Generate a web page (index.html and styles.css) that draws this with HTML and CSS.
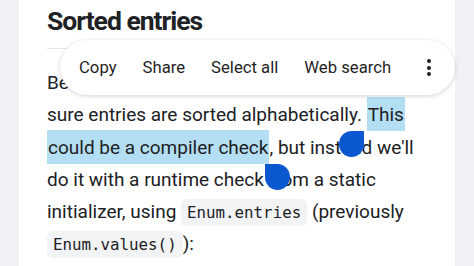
FILE: index.html
```html
<!DOCTYPE html>
<html>
<head>
<meta charset="utf-8">
<link rel="stylesheet" href="styles.css">
</head>
<body>
<div class="card">
  <h1 class="title">Sorted entries</h1>
  <div class="rule"></div>
  <p class="text">Be<br>sure entries are sorted alphabetically. <span class="sel">This</span><br><span class="sel">could be a compiler check</span>, but instead we'll<br>do it with a runtime check from a static<br>initializer, using <code class="code">Enum.entries</code> (previously<br><code class="code">Enum.values()</code>):</p>
</div>
<div class="popup">
  <span class="item item-copy">Copy</span>
  <span class="item">Share</span>
  <span class="item">Select all</span>
  <span class="item">Web search</span>
  <span class="more"><i class="dot"></i><i class="dot"></i><i class="dot"></i></span>
</div>
<div class="handle handle-a"></div>
<div class="handle handle-b"></div>
</body>
</html>
```
FILE: styles.css
```css
html, body {
  margin: 0;
  padding: 0;
  height: 100%;
}
body {
  background: #f0f1f4;
  font-family: Roboto, "Liberation Sans", sans-serif;
  color: #1f1f1f;
  overflow: hidden;
  position: relative;
}
.card {
  margin-left: 19px;
  width: 436px;
  height: 100%;
  background: #ffffff;
  padding: 0 0 0 28px;
  box-sizing: border-box;
}
.title {
  margin: 0;
  padding-top: 4px;
  font-size: 26.5px;
  letter-spacing: -1px;
  line-height: 34px;
  font-weight: 700;
  color: #202124;
}
.rule {
  margin-top: 10px;
  width: 400px;
  height: 1px;
  background: #e3e3e3;
}
.text {
  margin: 18px 0 0 0;
  font-size: 19px;
  line-height: 32.3px;
  color: #202124;
  white-space: nowrap;
}
.sel {
  background: #b4def3;
  padding: 6px 1px 5px 1px;
}
.code {
  font-family: "DejaVu Sans Mono", "Liberation Mono", monospace;
  font-size: 15.8px;
  line-height: 1;
  background: #f1f3f4;
  border-radius: 6px;
  padding: 4px 6px;
  color: #202124;
}
.popup {
  position: absolute;
  left: 60px;
  top: 40px;
  width: 395px;
  height: 55px;
  background: #ffffff;
  border-radius: 28px;
  box-shadow: 0 1px 4px rgba(0,0,0,0.18);
  display: flex;
  align-items: center;
  gap: 26px;
  font-size: 16.7px;
  color: #1f1f1f;
}
.item-copy { margin-left: 19px; }
.more {
  margin-left: auto;
  margin-right: 24px;
  display: flex;
  flex-direction: column;
  gap: 2.5px;
}
.dot {
  display: block;
  width: 4px;
  height: 4px;
  border-radius: 50%;
  background: #1f1f1f;
}
.handle {
  position: absolute;
  width: 25px;
  height: 26px;
  background: #0b57d0;
}
.handle-a {
  left: 339px;
  top: 131px;
  border-radius: 50% 0 50% 50%;
}
.handle-b {
  left: 265px;
  top: 164px;
  border-radius: 0 50% 50% 50%;
}
```
